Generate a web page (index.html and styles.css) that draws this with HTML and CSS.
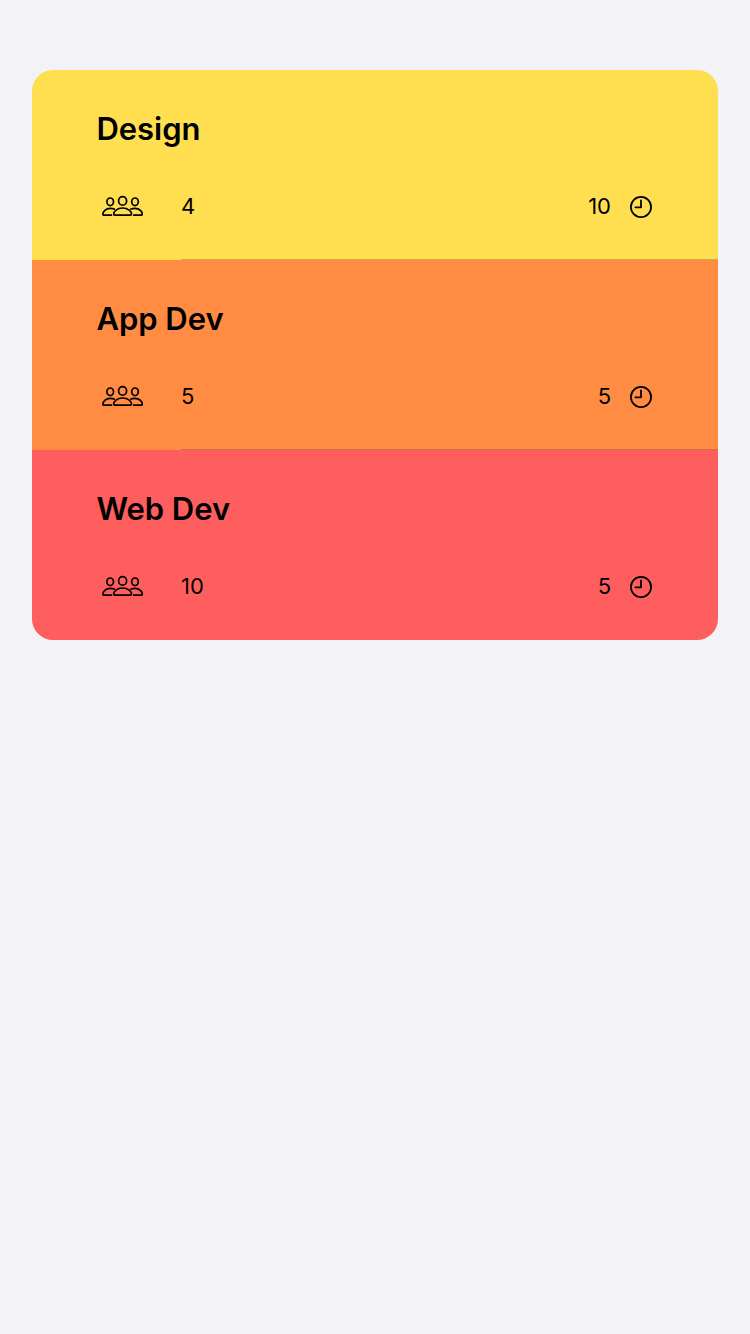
FILE: index.html
```html
<!DOCTYPE html>
<html lang="en">

<head>
  <meta charset="utf-8">
  <title>Daily Scrums</title>
  <link rel="stylesheet" href="styles.css">
</head>

<body>

  <!-- Shared icons -->
  <svg class="icon-defs" width="0" height="0">
    <symbol id="people" viewBox="-0.6 0 42 22">
      <ellipse cx="21" cy="5.9" rx="4" ry="4.2"/>
      <ellipse cx="8.6" cy="6.8" rx="3.3" ry="3.8"/>
      <ellipse cx="33.4" cy="6.8" rx="3.3" ry="3.8"/>
      <path d="M13.4 20.2C12.4 20.2 12.1 19.7 12.1 18.9C12.1 16.6 15.3 13 21 13C26.7 13 29.9 16.6 29.9 18.9C29.9 19.7 29.6 20.2 28.6 20.2Z"/>
      <path d="M9.9 20.2H2.5C1.6 20.2 1.3 19.7 1.3 19C1.3 16.7 4 13.3 8.6 13.3C10.3 13.3 11.6 13.6 12.6 14.1"/>
      <path d="M32.1 20.2H39.5C40.4 20.2 40.7 19.7 40.7 19C40.7 16.7 38 13.3 33.4 13.3C31.7 13.3 30.4 13.6 29.4 14.1"/>
    </symbol>
    <symbol id="clock" viewBox="0 0 24 24">
      <circle cx="12" cy="12" r="10.1"/>
      <path d="M12 5.4V12.3H6.4"/>
    </symbol>
  </svg>

  <ul class="scrum-list">
    <li class="scrum-card yellow">
      <h2 class="scrum-title">Design</h2>
      <div class="scrum-info">
        <svg class="people-icon"><use href="#people"/></svg>
        <span class="attendees">4</span>
        <span class="minutes">10</span>
        <svg class="clock-icon"><use href="#clock"/></svg>
      </div>
    </li>
    <li class="scrum-card orange">
      <h2 class="scrum-title">App Dev</h2>
      <div class="scrum-info">
        <svg class="people-icon"><use href="#people"/></svg>
        <span class="attendees">5</span>
        <span class="minutes">5</span>
        <svg class="clock-icon"><use href="#clock"/></svg>
      </div>
    </li>
    <li class="scrum-card red">
      <h2 class="scrum-title">Web Dev</h2>
      <div class="scrum-info">
        <svg class="people-icon"><use href="#people"/></svg>
        <span class="attendees">10</span>
        <span class="minutes">5</span>
        <svg class="clock-icon"><use href="#clock"/></svg>
      </div>
    </li>
  </ul>

</body>

</html>
```
FILE: styles.css
```css
* {
  box-sizing: border-box;
}

body {
  margin: 0;
  padding: 70px 32px;
  min-height: 1334px;
  background: #f2f2f7;
  color: black;
  font-family: Inter, "Liberation Sans", sans-serif;
}

.icon-defs {
  display: block;
}

.scrum-list {
  margin: 0;
  padding: 0;
  list-style: none;
  border-radius: 21px;
  overflow: hidden;
}

.scrum-card {
  height: 190px;
  padding: 39px 64px 0;
}

.yellow {
  background-color: #ffde4f;
}

.orange {
  background-color: #ff8c42;
}

.red {
  background-color: #ff5e5e;
}

/* Row separator, starts in line with the attendee count. */
.yellow,
.orange {
  background-image: linear-gradient(rgba(60, 60, 67, 0.29), rgba(60, 60, 67, 0.29));
  background-repeat: no-repeat;
  background-position: 149px 189px;
  background-size: 537px 1px;
}

.scrum-title {
  margin: 0 0 0 0.5px;
  font-size: 31px;
  line-height: 40px;
  font-weight: 600;
  letter-spacing: -0.05px;
}

.scrum-info {
  display: flex;
  align-items: center;
  height: 24px;
  margin-top: 45px;
  font-size: 22px;
  line-height: 24px;
}

.people-icon,
.clock-icon {
  fill: none;
  stroke: black;
  stroke-width: 1.7;
  stroke-linecap: round;
  stroke-linejoin: round;
}

.people-icon {
  width: 42px;
  height: 22px;
  margin-left: 5px;
}

.attendees {
  margin-left: 38px;
}

.minutes {
  margin-left: auto;
}

.clock-icon {
  width: 24px;
  height: 24px;
  margin: 2px 1px 0 18px;
  stroke-width: 1.8;
}
```
